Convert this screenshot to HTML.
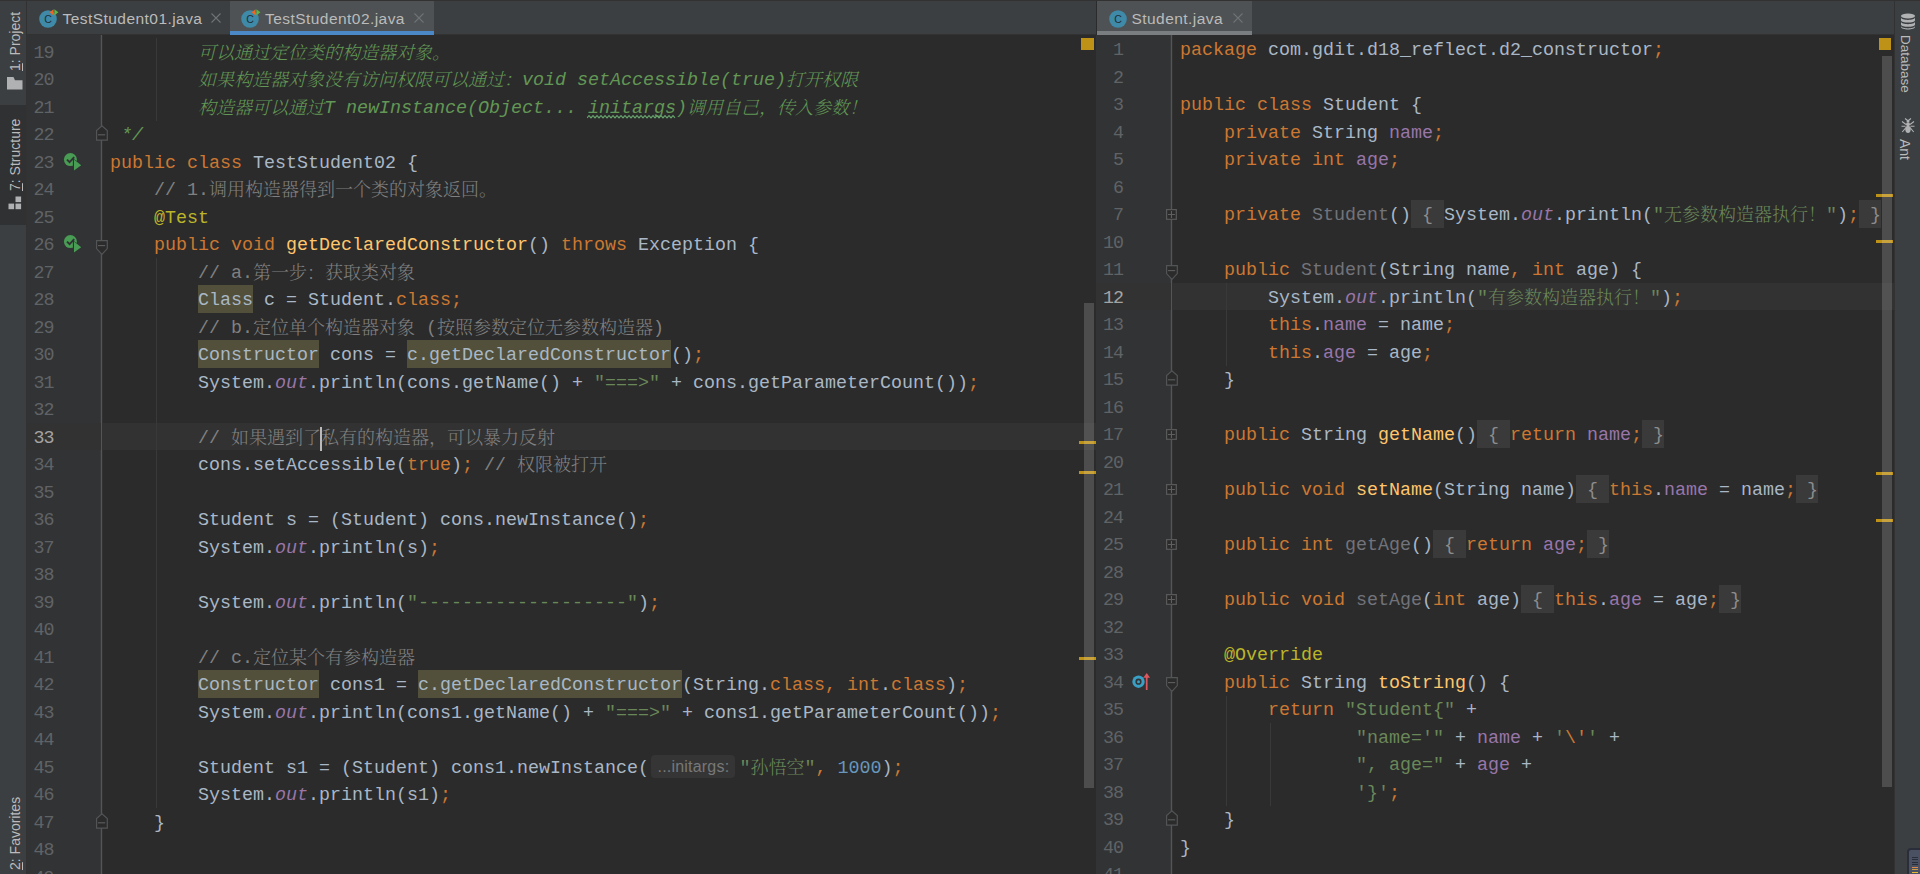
<!DOCTYPE html>
<html lang="zh-CN">
<head>
<meta charset="utf-8">
<title>IntelliJ IDEA</title>
<style>
html,body{margin:0;padding:0;}
body{width:1920px;height:874px;overflow:hidden;background:#2b2b2b;position:relative;
  font-family:"Liberation Sans","Noto Sans CJK SC",sans-serif;}
.abs,.ln,.cl,.r{position:absolute;}
.r{display:block;}
/* code */
.cl{height:27.5px;line-height:27.5px;white-space:pre;color:#a9b7c6;
  font-family:"Liberation Mono","Noto Serif CJK SC",monospace;font-size:18.333px;}
.ln{height:27.5px;line-height:27.5px;text-align:right;letter-spacing:-1px;color:#606366;
  font-family:"Liberation Mono",monospace;font-size:18.333px;}
.ln.cur{color:#a4a3a3;}
i.z{font-weight:300;line-height:0;position:relative;top:1px;font-style:inherit;font-family:"Noto Serif CJK SC","Noto Sans CJK SC",serif;font-size:18px;}
.k{color:#cc7832;} .s{color:#6a8759;} .n{color:#6897bb;} .c{color:#808080;}
.dc{color:#629755;font-style:italic;} .dcw{color:#629755;font-style:italic;}
.a{color:#bbb529;} .m{color:#ffc66d;} .f{color:#9876aa;} .sf{color:#9876aa;font-style:italic;}
.u{color:#72737a;} .fo{color:#8c8c8c;}
b.caret{display:inline-block;width:2px;height:24px;background:#bbbbbb;vertical-align:top;margin:2px -1px 0 -1px;}
b.hint{display:inline-block;font-weight:normal;font-family:"Liberation Sans",sans-serif;font-size:16px;color:#787878;
  background:#353535;border-radius:4px;height:22.5px;line-height:23.5px;vertical-align:top;margin:0.5px 4px 0 2.5px;padding:0 6px 0 6px;width:72px;box-sizing:content-box;letter-spacing:0.2px;text-align:center;}
/* ui text */
.tab{position:absolute;top:2px;height:33px;line-height:34px;font-size:15.5px;letter-spacing:0.45px;color:#bbbbbb;white-space:pre;}
.vt u{text-decoration-thickness:1.4px;text-underline-offset:1.5px;}
.vt{position:absolute;font-size:14px;color:#bbbbbb;white-space:pre;transform-origin:0 0;line-height:18px;height:18px;}
</style>
</head>
<body>
<!-- chrome backgrounds -->
<div class="r" style="left:0;top:0;width:1920px;height:1px;background:#323232"></div>
<div class="r" style="left:27px;top:1px;width:1867px;height:33px;background:#3c3f41"></div>
<div class="r" style="left:27px;top:34px;width:1867px;height:1px;background:#323232"></div>
<!-- left tool strip -->
<div class="r" style="left:0;top:1px;width:26px;height:873px;background:#3c3f41"></div>
<div class="r" style="left:26px;top:1px;width:1px;height:873px;background:#323232"></div>
<div class="r" style="left:0;top:105px;width:26px;height:120px;background:#2f3133"></div>
<!-- right tool strip -->
<div class="r" style="left:1895px;top:1px;width:25px;height:873px;background:#3c3f41"></div>
<div class="r" style="left:1894px;top:1px;width:1px;height:873px;background:#323232"></div>
<!-- left gutter -->
<div class="r" style="left:27px;top:35px;width:74px;height:839px;background:#313335"></div>
<div class="r" style="left:100px;top:35px;width:1px;height:839px;background:rgba(85,85,85,.22)"></div>
<div class="r" style="left:101px;top:35px;width:1px;height:839px;background:#555555"></div>
<div class="r" style="left:102px;top:35px;width:1px;height:839px;background:rgba(85,85,85,.18)"></div>
<!-- right gutter -->
<div class="r" style="left:1096px;top:1px;width:1px;height:34px;background:#2b2b2b"></div>
<div class="r" style="left:1096px;top:35px;width:75px;height:839px;background:#313335"></div>
<div class="r" style="left:1170px;top:35px;width:1px;height:839px;background:rgba(85,85,85,.22)"></div>
<div class="r" style="left:1171px;top:35px;width:1px;height:839px;background:#555555"></div>
<div class="r" style="left:1172px;top:35px;width:1px;height:839px;background:rgba(85,85,85,.18)"></div>
<!-- caret rows -->
<div class="r" style="left:27px;top:423px;width:74px;height:27px;background:#323232"></div>
<div class="r" style="left:102px;top:423px;width:994px;height:27px;background:#323232"></div>
<div class="r" style="left:1096px;top:283px;width:75px;height:27px;background:#323232"></div>
<div class="r" style="left:1172px;top:283px;width:722px;height:27px;background:#323232"></div>
<!-- tabs -->
<div class="r" style="left:230px;top:1px;width:204px;height:33px;background:#4e5254"></div>
<div class="r" style="left:230px;top:31px;width:204px;height:4px;background:#4a88c7"></div>
<div class="r" style="left:1097px;top:1px;width:155px;height:33px;background:#4e5254"></div>
<div class="r" style="left:1097px;top:31px;width:155px;height:4px;background:#7a7e81"></div>
<div class="tab" style="left:62.5px">TestStudent01.java</div>
<div class="tab" style="left:265px">TestStudent02.java</div>
<div class="tab" style="left:1131.5px">Student.java</div>

<div id="bg">
<div class="r" style="left:198.0px;top:285px;width:55.0px;height:28px;background:#52503a"></div>
<div class="r" style="left:198.0px;top:340px;width:121.0px;height:28px;background:#52503a"></div>
<div class="r" style="left:407.0px;top:340px;width:264.0px;height:28px;background:#52503a"></div>
<div class="r" style="left:198.0px;top:670px;width:121.0px;height:28px;background:#52503a"></div>
<div class="r" style="left:418.1px;top:670px;width:264.0px;height:28px;background:#52503a"></div>
<div class="r" style="left:1411.0px;top:200px;width:33.0px;height:28px;background:#3a3a3a"></div>
<div class="r" style="left:1859.1px;top:200px;width:22.0px;height:28px;background:#3a3a3a"></div>
<div class="r" style="left:1477.0px;top:420px;width:33.0px;height:28px;background:#3a3a3a"></div>
<div class="r" style="left:1642.1px;top:420px;width:22.0px;height:28px;background:#3a3a3a"></div>
<div class="r" style="left:1576.1px;top:475px;width:33.0px;height:28px;background:#3a3a3a"></div>
<div class="r" style="left:1796.1px;top:475px;width:22.0px;height:28px;background:#3a3a3a"></div>
<div class="r" style="left:1433.0px;top:530px;width:33.0px;height:28px;background:#3a3a3a"></div>
<div class="r" style="left:1587.1px;top:530px;width:22.0px;height:28px;background:#3a3a3a"></div>
<div class="r" style="left:1521.1px;top:585px;width:33.0px;height:28px;background:#3a3a3a"></div>
<div class="r" style="left:1719.1px;top:585px;width:22.0px;height:28px;background:#3a3a3a"></div>
</div>
<div id="lp">
<div class="ln" style="top:39.5px;left:27px;width:26.5px">19</div>
<div class="cl" style="top:39.5px;left:110px">        <span class="dc"><i class="z">可以通过定位类的构造器对象。</i></span></div>
<div class="ln" style="top:67.0px;left:27px;width:26.5px">20</div>
<div class="cl" style="top:67.0px;left:110px">        <span class="dc"><i class="z">如果构造器对象没有访问权限可以通过：</i>void setAccessible(true)<i class="z">打开权限</i></span></div>
<div class="ln" style="top:94.5px;left:27px;width:26.5px">21</div>
<div class="cl" style="top:94.5px;left:110px">        <span class="dc"><i class="z">构造器可以通过</i>T newInstance(Object... </span><span class="dcw">initargs</span><span class="dc">)<i class="z">调用自己，传入参数！</i></span></div>
<div class="ln" style="top:122.0px;left:27px;width:26.5px">22</div>
<div class="cl" style="top:122.0px;left:110px"> <span class="dc">*/</span></div>
<div class="ln" style="top:149.5px;left:27px;width:26.5px">23</div>
<div class="cl" style="top:149.5px;left:110px"><span class="k">public class</span> TestStudent02 {</div>
<div class="ln" style="top:177.0px;left:27px;width:26.5px">24</div>
<div class="cl" style="top:177.0px;left:110px">    <span class="c">// 1.<i class="z">调用构造器得到一个类的对象返回。</i></span></div>
<div class="ln" style="top:204.5px;left:27px;width:26.5px">25</div>
<div class="cl" style="top:204.5px;left:110px">    <span class="a">@Test</span></div>
<div class="ln" style="top:232.0px;left:27px;width:26.5px">26</div>
<div class="cl" style="top:232.0px;left:110px">    <span class="k">public void</span> <span class="m">getDeclaredConstructor</span>() <span class="k">throws</span> Exception {</div>
<div class="ln" style="top:259.5px;left:27px;width:26.5px">27</div>
<div class="cl" style="top:259.5px;left:110px">        <span class="c">// a.<i class="z">第一步：获取类对象</i></span></div>
<div class="ln" style="top:287.0px;left:27px;width:26.5px">28</div>
<div class="cl" style="top:287.0px;left:110px">        <span class="w">Class</span> c = Student.<span class="k">class;</span></div>
<div class="ln" style="top:314.5px;left:27px;width:26.5px">29</div>
<div class="cl" style="top:314.5px;left:110px">        <span class="c">// b.<i class="z">定位单个构造器对象</i> (<i class="z">按照参数定位无参数构造器</i>)</span></div>
<div class="ln" style="top:342.0px;left:27px;width:26.5px">30</div>
<div class="cl" style="top:342.0px;left:110px">        <span class="w">Constructor</span> cons = <span class="w">c.getDeclaredConstructor</span>()<span class="k">;</span></div>
<div class="ln" style="top:369.5px;left:27px;width:26.5px">31</div>
<div class="cl" style="top:369.5px;left:110px">        System.<span class="sf">out</span>.println(cons.getName() + <span class="s">"===&gt;"</span> + cons.getParameterCount())<span class="k">;</span></div>
<div class="ln" style="top:397.0px;left:27px;width:26.5px">32</div>
<div class="ln cur" style="top:424.5px;left:27px;width:26.5px">33</div>
<div class="cl" style="top:424.5px;left:110px">        <span class="c">// <i class="z">如果遇到了</i></span><b class="caret"></b><span class="c"><i class="z">私有的构造器，可以暴力反射</i></span></div>
<div class="ln" style="top:452.0px;left:27px;width:26.5px">34</div>
<div class="cl" style="top:452.0px;left:110px">        cons.setAccessible(<span class="k">true</span>)<span class="k">;</span> <span class="c">// <i class="z">权限被打开</i></span></div>
<div class="ln" style="top:479.5px;left:27px;width:26.5px">35</div>
<div class="ln" style="top:507.0px;left:27px;width:26.5px">36</div>
<div class="cl" style="top:507.0px;left:110px">        Student s = (Student) cons.newInstance()<span class="k">;</span></div>
<div class="ln" style="top:534.5px;left:27px;width:26.5px">37</div>
<div class="cl" style="top:534.5px;left:110px">        System.<span class="sf">out</span>.println(s)<span class="k">;</span></div>
<div class="ln" style="top:562.0px;left:27px;width:26.5px">38</div>
<div class="ln" style="top:589.5px;left:27px;width:26.5px">39</div>
<div class="cl" style="top:589.5px;left:110px">        System.<span class="sf">out</span>.println(<span class="s">"-------------------"</span>)<span class="k">;</span></div>
<div class="ln" style="top:617.0px;left:27px;width:26.5px">40</div>
<div class="ln" style="top:644.5px;left:27px;width:26.5px">41</div>
<div class="cl" style="top:644.5px;left:110px">        <span class="c">// c.<i class="z">定位某个有参构造器</i></span></div>
<div class="ln" style="top:672.0px;left:27px;width:26.5px">42</div>
<div class="cl" style="top:672.0px;left:110px">        <span class="w">Constructor</span> cons1 = <span class="w">c.getDeclaredConstructor</span>(String.<span class="k">class,</span> <span class="k">int</span>.<span class="k">class</span>)<span class="k">;</span></div>
<div class="ln" style="top:699.5px;left:27px;width:26.5px">43</div>
<div class="cl" style="top:699.5px;left:110px">        System.<span class="sf">out</span>.println(cons1.getName() + <span class="s">"===&gt;"</span> + cons1.getParameterCount())<span class="k">;</span></div>
<div class="ln" style="top:727.0px;left:27px;width:26.5px">44</div>
<div class="ln" style="top:754.5px;left:27px;width:26.5px">45</div>
<div class="cl" style="top:754.5px;left:110px">        Student s1 = (Student) cons1.newInstance(<b class="hint">...initargs:</b><span class="s">"<i class="z">孙悟空</i>"</span><span class="k">,</span> <span class="n">1000</span>)<span class="k">;</span></div>
<div class="ln" style="top:782.0px;left:27px;width:26.5px">46</div>
<div class="cl" style="top:782.0px;left:110px">        System.<span class="sf">out</span>.println(s1)<span class="k">;</span></div>
<div class="ln" style="top:809.5px;left:27px;width:26.5px">47</div>
<div class="cl" style="top:809.5px;left:110px">    }</div>
<div class="ln" style="top:837.0px;left:27px;width:26.5px">48</div>
<div class="ln" style="top:864.5px;left:27px;width:26.5px">49</div>
</div>
<div id="rp">
<div class="ln" style="top:37.0px;left:1097px;width:26px">1</div>
<div class="cl" style="top:37.0px;left:1180px"><span class="k">package</span> com.gdit.d18_reflect.d2_constructor<span class="k">;</span></div>
<div class="ln" style="top:64.5px;left:1097px;width:26px">2</div>
<div class="ln" style="top:92.0px;left:1097px;width:26px">3</div>
<div class="cl" style="top:92.0px;left:1180px"><span class="k">public class</span> Student {</div>
<div class="ln" style="top:119.5px;left:1097px;width:26px">4</div>
<div class="cl" style="top:119.5px;left:1180px">    <span class="k">private</span> String <span class="f">name</span><span class="k">;</span></div>
<div class="ln" style="top:147.0px;left:1097px;width:26px">5</div>
<div class="cl" style="top:147.0px;left:1180px">    <span class="k">private int</span> <span class="f">age</span><span class="k">;</span></div>
<div class="ln" style="top:174.5px;left:1097px;width:26px">6</div>
<div class="ln" style="top:202.0px;left:1097px;width:26px">7</div>
<div class="cl" style="top:202.0px;left:1180px">    <span class="k">private</span> <span class="u">Student</span>()<span class="fo"> { </span>System.<span class="sf">out</span>.println(<span class="s">"<i class="z">无参数构造器执行！</i>"</span>)<span class="k">;</span><span class="fo"> }</span></div>
<div class="ln" style="top:229.5px;left:1097px;width:26px">10</div>
<div class="ln" style="top:257.0px;left:1097px;width:26px">11</div>
<div class="cl" style="top:257.0px;left:1180px">    <span class="k">public</span> <span class="u">Student</span>(String name<span class="k">,</span> <span class="k">int</span> age) {</div>
<div class="ln cur" style="top:284.5px;left:1097px;width:26px">12</div>
<div class="cl" style="top:284.5px;left:1180px">        System.<span class="sf">out</span>.println(<span class="s">"<i class="z">有参数构造器执行！</i>"</span>)<span class="k">;</span></div>
<div class="ln" style="top:312.0px;left:1097px;width:26px">13</div>
<div class="cl" style="top:312.0px;left:1180px">        <span class="k">this</span>.<span class="f">name</span> = name<span class="k">;</span></div>
<div class="ln" style="top:339.5px;left:1097px;width:26px">14</div>
<div class="cl" style="top:339.5px;left:1180px">        <span class="k">this</span>.<span class="f">age</span> = age<span class="k">;</span></div>
<div class="ln" style="top:367.0px;left:1097px;width:26px">15</div>
<div class="cl" style="top:367.0px;left:1180px">    }</div>
<div class="ln" style="top:394.5px;left:1097px;width:26px">16</div>
<div class="ln" style="top:422.0px;left:1097px;width:26px">17</div>
<div class="cl" style="top:422.0px;left:1180px">    <span class="k">public</span> String <span class="m">getName</span>()<span class="fo"> { </span><span class="k">return</span> <span class="f">name</span><span class="k">;</span><span class="fo"> }</span></div>
<div class="ln" style="top:449.5px;left:1097px;width:26px">20</div>
<div class="ln" style="top:477.0px;left:1097px;width:26px">21</div>
<div class="cl" style="top:477.0px;left:1180px">    <span class="k">public void</span> <span class="m">setName</span>(String name)<span class="fo"> { </span><span class="k">this</span>.<span class="f">name</span> = name<span class="k">;</span><span class="fo"> }</span></div>
<div class="ln" style="top:504.5px;left:1097px;width:26px">24</div>
<div class="ln" style="top:532.0px;left:1097px;width:26px">25</div>
<div class="cl" style="top:532.0px;left:1180px">    <span class="k">public int</span> <span class="u">getAge</span>()<span class="fo"> { </span><span class="k">return</span> <span class="f">age</span><span class="k">;</span><span class="fo"> }</span></div>
<div class="ln" style="top:559.5px;left:1097px;width:26px">28</div>
<div class="ln" style="top:587.0px;left:1097px;width:26px">29</div>
<div class="cl" style="top:587.0px;left:1180px">    <span class="k">public void</span> <span class="u">setAge</span>(<span class="k">int</span> age)<span class="fo"> { </span><span class="k">this</span>.<span class="f">age</span> = age<span class="k">;</span><span class="fo"> }</span></div>
<div class="ln" style="top:614.5px;left:1097px;width:26px">32</div>
<div class="ln" style="top:642.0px;left:1097px;width:26px">33</div>
<div class="cl" style="top:642.0px;left:1180px">    <span class="a">@Override</span></div>
<div class="ln" style="top:669.5px;left:1097px;width:26px">34</div>
<div class="cl" style="top:669.5px;left:1180px">    <span class="k">public</span> String <span class="m">toString</span>() {</div>
<div class="ln" style="top:697.0px;left:1097px;width:26px">35</div>
<div class="cl" style="top:697.0px;left:1180px">        <span class="k">return</span> <span class="s">"Student{"</span> +</div>
<div class="ln" style="top:724.5px;left:1097px;width:26px">36</div>
<div class="cl" style="top:724.5px;left:1180px">                <span class="s">"name='"</span> + <span class="f">name</span> + <span class="s">'</span><span class="k">\'</span><span class="s">'</span> +</div>
<div class="ln" style="top:752.0px;left:1097px;width:26px">37</div>
<div class="cl" style="top:752.0px;left:1180px">                <span class="s">", age="</span> + <span class="f">age</span> +</div>
<div class="ln" style="top:779.5px;left:1097px;width:26px">38</div>
<div class="cl" style="top:779.5px;left:1180px">                <span class="s">'}'</span><span class="k">;</span></div>
<div class="ln" style="top:807.0px;left:1097px;width:26px">39</div>
<div class="cl" style="top:807.0px;left:1180px">    }</div>
<div class="ln" style="top:834.5px;left:1097px;width:26px">40</div>
<div class="cl" style="top:834.5px;left:1180px">}</div>
<div class="ln" style="top:862.0px;left:1097px;width:26px">41</div>
</div>
<div class="r" style="left:156px;top:38px;width:1px;height:82.5px;background:#393939"></div>
<div class="r" style="left:156px;top:258px;width:1px;height:550px;background:#393939"></div>
<div class="r" style="left:1226px;top:283px;width:1px;height:82.5px;background:#393939"></div>
<div class="r" style="left:1226px;top:695.5px;width:1px;height:110px;background:#393939"></div>
<div class="r" style="left:1270px;top:723px;width:1px;height:82.5px;background:#393939"></div>
<svg class="abs" style="left:587px;top:115.3px" width="89" height="4" viewBox="0 0 89 4"><polyline points="0,2.9 2,0.6 4,2.9 6,0.6 8,2.9 10,0.6 12,2.9 14,0.6 16,2.9 18,0.6 20,2.9 22,0.6 24,2.9 26,0.6 28,2.9 30,0.6 32,2.9 34,0.6 36,2.9 38,0.6 40,2.9 42,0.6 44,2.9 46,0.6 48,2.9 50,0.6 52,2.9 54,0.6 56,2.9 58,0.6 60,2.9 62,0.6 64,2.9 66,0.6 68,2.9 70,0.6 72,2.9 74,0.6 76,2.9 78,0.6 80,2.9 82,0.6 84,2.9 86,0.6 88,2.9" fill="none" stroke="#66a36d" stroke-width="1.15"/></svg>
<div class="r" style="left:1081px;top:38px;width:13px;height:12px;background:#be9117"></div>
<div class="r" style="left:1879px;top:38px;width:12px;height:12px;background:#be9117"></div>
<div class="r" style="left:1079px;top:441px;width:17px;height:3px;background:#be9117"></div>
<div class="r" style="left:1079px;top:471px;width:17px;height:3px;background:#be9117"></div>
<div class="r" style="left:1079px;top:657px;width:17px;height:3px;background:#be9117"></div>
<div class="r" style="left:1876px;top:194px;width:17px;height:3px;background:#be9117"></div>
<div class="r" style="left:1876px;top:240px;width:17px;height:3px;background:#be9117"></div>
<div class="r" style="left:1876px;top:472px;width:17px;height:3px;background:#be9117"></div>
<div class="r" style="left:1876px;top:519px;width:17px;height:3px;background:#be9117"></div>
<div class="r" style="left:1084px;top:303px;width:10px;height:485px;background:rgba(255,255,255,.16)"></div>
<div class="r" style="left:1882px;top:56px;width:10px;height:731px;background:rgba(255,255,255,.16)"></div>
<svg class="abs" style="left:95px;top:124.1px" width="14" height="18" viewBox="-1 -1 14 18"><path d="M0.6 15.1H11.3V5.6L5.95 0.8L0.6 5.6Z" fill="#2b2b2b" stroke="#525456" stroke-width="1.2"/><path d="M2 9.8H9.2" stroke="#5c5e60" stroke-width="1.1"/></svg>
<svg class="abs" style="left:95px;top:238.8px" width="14" height="18" viewBox="-1 -1 14 18"><path d="M0.6 0.6H11.3V8.6L5.95 14.4L0.6 8.6Z" fill="#2b2b2b" stroke="#525456" stroke-width="1.2"/><path d="M2 5.6H9.2" stroke="#5c5e60" stroke-width="1.1"/></svg>
<svg class="abs" style="left:95px;top:811.6px" width="14" height="18" viewBox="-1 -1 14 18"><path d="M0.6 15.1H11.3V5.6L5.95 0.8L0.6 5.6Z" fill="#2b2b2b" stroke="#525456" stroke-width="1.2"/><path d="M2 9.8H9.2" stroke="#5c5e60" stroke-width="1.1"/></svg>
<svg class="abs" style="left:1165px;top:208.1px" width="13" height="13" viewBox="-1 -1 13 13"><rect x="0.6" y="0.6" width="9.7" height="9.7" fill="#2b2b2b" stroke="#595959" stroke-width="1.2"/><path d="M2 5.45H8.9M5.45 2V8.9" stroke="#606060" stroke-width="1.1"/></svg>
<svg class="abs" style="left:1165px;top:428.1px" width="13" height="13" viewBox="-1 -1 13 13"><rect x="0.6" y="0.6" width="9.7" height="9.7" fill="#2b2b2b" stroke="#595959" stroke-width="1.2"/><path d="M2 5.45H8.9M5.45 2V8.9" stroke="#606060" stroke-width="1.1"/></svg>
<svg class="abs" style="left:1165px;top:483.1px" width="13" height="13" viewBox="-1 -1 13 13"><rect x="0.6" y="0.6" width="9.7" height="9.7" fill="#2b2b2b" stroke="#595959" stroke-width="1.2"/><path d="M2 5.45H8.9M5.45 2V8.9" stroke="#606060" stroke-width="1.1"/></svg>
<svg class="abs" style="left:1165px;top:538.1px" width="13" height="13" viewBox="-1 -1 13 13"><rect x="0.6" y="0.6" width="9.7" height="9.7" fill="#2b2b2b" stroke="#595959" stroke-width="1.2"/><path d="M2 5.45H8.9M5.45 2V8.9" stroke="#606060" stroke-width="1.1"/></svg>
<svg class="abs" style="left:1165px;top:593.1px" width="13" height="13" viewBox="-1 -1 13 13"><rect x="0.6" y="0.6" width="9.7" height="9.7" fill="#2b2b2b" stroke="#595959" stroke-width="1.2"/><path d="M2 5.45H8.9M5.45 2V8.9" stroke="#606060" stroke-width="1.1"/></svg>
<svg class="abs" style="left:1165px;top:263.8px" width="14" height="18" viewBox="-1 -1 14 18"><path d="M0.6 0.6H11.3V8.6L5.95 14.4L0.6 8.6Z" fill="#2b2b2b" stroke="#525456" stroke-width="1.2"/><path d="M2 5.6H9.2" stroke="#5c5e60" stroke-width="1.1"/></svg>
<svg class="abs" style="left:1165px;top:369.1px" width="14" height="18" viewBox="-1 -1 14 18"><path d="M0.6 15.1H11.3V5.6L5.95 0.8L0.6 5.6Z" fill="#2b2b2b" stroke="#525456" stroke-width="1.2"/><path d="M2 9.8H9.2" stroke="#5c5e60" stroke-width="1.1"/></svg>
<svg class="abs" style="left:1165px;top:676.3px" width="14" height="18" viewBox="-1 -1 14 18"><path d="M0.6 0.6H11.3V8.6L5.95 14.4L0.6 8.6Z" fill="#2b2b2b" stroke="#525456" stroke-width="1.2"/><path d="M2 5.6H9.2" stroke="#5c5e60" stroke-width="1.1"/></svg>
<svg class="abs" style="left:1165px;top:809.1px" width="14" height="18" viewBox="-1 -1 14 18"><path d="M0.6 15.1H11.3V5.6L5.95 0.8L0.6 5.6Z" fill="#2b2b2b" stroke="#525456" stroke-width="1.2"/><path d="M2 9.8H9.2" stroke="#5c5e60" stroke-width="1.1"/></svg>
<svg class="abs" style="left:63px;top:151.5px" width="20" height="20" viewBox="0 0 20 20"><circle cx="7.4" cy="7.6" r="6.5" fill="#499c54"/><path d="M4 7.6L6.6 10.2L11.2 5.2" stroke="#313335" stroke-width="1.9" fill="none"/><path d="M9.9 6.2V19.6L19.4 13.3Z" fill="#313335"/><path d="M11 7.4V18.4L18.2 13.2Z" fill="#499c54"/></svg>
<svg class="abs" style="left:63px;top:234px" width="20" height="20" viewBox="0 0 20 20"><circle cx="7.4" cy="7.6" r="6.5" fill="#499c54"/><path d="M4 7.6L6.6 10.2L11.2 5.2" stroke="#313335" stroke-width="1.9" fill="none"/><path d="M9.9 6.2V19.6L19.4 13.3Z" fill="#313335"/><path d="M11 7.4V18.4L18.2 13.2Z" fill="#499c54"/></svg>
<svg class="abs" style="left:1132px;top:671px" width="20" height="20" viewBox="0 0 20 20"><circle cx="6.5" cy="10.7" r="6.2" fill="#3a9fc4"/><circle cx="6.5" cy="10.7" r="3.1" fill="#313335"/><circle cx="6.5" cy="10.7" r="1.5" fill="#3a9fc4"/><path d="M14.7 19V4" stroke="#db5860" stroke-width="1.7"/><path d="M11.3 6.8L14.7 2L18.1 6.8Z" fill="#db5860"/></svg>
<svg class="abs" style="left:38px;top:8px" width="22" height="22" viewBox="0 0 22 22"><circle cx="10" cy="11" r="8.8" fill="#3e8aa8"/><text x="10" y="14.7" text-anchor="middle" font-family="Liberation Sans, sans-serif" font-size="10.5" fill="#1f2e36">C</text><path d="M15.6 1.2V7.4L11.6 4.3Z" fill="#f26522"/><path d="M16.4 1.2V7.4L20.4 4.3Z" fill="#62b543"/></svg>
<svg class="abs" style="left:240px;top:8px" width="22" height="22" viewBox="0 0 22 22"><circle cx="10" cy="11" r="8.8" fill="#3e8aa8"/><text x="10" y="14.7" text-anchor="middle" font-family="Liberation Sans, sans-serif" font-size="10.5" fill="#1f2e36">C</text><path d="M15.6 1.2V7.4L11.6 4.3Z" fill="#f26522"/><path d="M16.4 1.2V7.4L20.4 4.3Z" fill="#62b543"/></svg>
<svg class="abs" style="left:1108px;top:8px" width="22" height="22" viewBox="0 0 22 22"><circle cx="10" cy="11" r="8.8" fill="#3e8aa8"/><text x="10" y="14.7" text-anchor="middle" font-family="Liberation Sans, sans-serif" font-size="10.5" fill="#1f2e36">C</text></svg>
<svg class="abs" style="left:211px;top:13px" width="10" height="10" viewBox="0 0 10 10"><path d="M0.5 0.5L9.5 9.5M9.5 0.5L0.5 9.5" stroke="#6f7375" stroke-width="1.1" fill="none"/></svg>
<svg class="abs" style="left:414px;top:13px" width="10" height="10" viewBox="0 0 10 10"><path d="M0.5 0.5L9.5 9.5M9.5 0.5L0.5 9.5" stroke="#6f7375" stroke-width="1.1" fill="none"/></svg>
<svg class="abs" style="left:1233px;top:13px" width="10" height="10" viewBox="0 0 10 10"><path d="M0.5 0.5L9.5 9.5M9.5 0.5L0.5 9.5" stroke="#6f7375" stroke-width="1.1" fill="none"/></svg>
<div class="vt" style="left:6px;top:70.5px;font-size:14px;transform:rotate(-90deg)"><u>1</u>: Project</div>
<div class="vt" style="left:6px;top:190.5px;font-size:14px;transform:rotate(-90deg)"><u>7</u>: Structure</div>
<div class="vt" style="left:6px;top:870px;font-size:14px;transform:rotate(-90deg)"><u>2</u>: Favorites</div>
<div class="vt" style="left:1914px;top:35px;font-size:13.5px;transform:rotate(90deg)">Database</div>
<div class="vt" style="left:1914px;top:138.5px;font-size:14px;transform:rotate(90deg)">Ant</div>
<svg class="abs" style="left:7px;top:77px" width="16" height="13" viewBox="0 0 16 13"><path d="M0 0H6.5L8 3.2H15.5V12.5H0Z" fill="#afb1b3"/></svg>
<svg class="abs" style="left:8px;top:196px" width="14" height="14" viewBox="0 0 14 14"><rect x="7.5" y="0.5" width="5.6" height="5.6" fill="#afb1b3"/><rect x="0.5" y="7.6" width="5.6" height="5.6" fill="#afb1b3"/><rect x="7.5" y="7.6" width="5.6" height="5.6" fill="#afb1b3"/></svg>
<svg class="abs" style="left:1900px;top:13px" width="16" height="17" viewBox="0 0 16 17"><g fill="#afb1b3"><ellipse cx="8" cy="3" rx="7" ry="2.4"/><path d="M1 4.6C1 7.8 15 7.8 15 4.6V7.2C15 10.4 1 10.4 1 7.2Z"/><path d="M1 8.8C1 12 15 12 15 8.8V11.4C15 14.6 1 14.6 1 11.4Z"/><path d="M1 13C1 16.2 15 16.2 15 13V13.8C15 17.4 1 17.4 1 13.8Z"/></g></svg>
<svg class="abs" style="left:1900px;top:118px" width="16" height="16" viewBox="0 0 16 16"><g fill="#afb1b3" stroke="#afb1b3" stroke-width="1.1"><ellipse cx="8" cy="11.3" rx="2.7" ry="3.6" stroke="none"/><circle cx="8" cy="6.2" r="2" stroke="none"/><circle cx="8" cy="3" r="1.5" stroke="none"/><path d="M6 6.5L2 3.5M10 6.5L14 3.5M5.6 8.2H1.5M10.4 8.2H14.5M6 9.5L2.3 14M10 9.5L13.7 14M7 2L5 0.5M9 2L11 0.5" fill="none"/></g></svg>
<div class="r" style="left:1907px;top:848px;width:20px;height:30px;background:#4a5163;border:2px solid #2a2e3a;border-radius:4px"></div>
<div class="r" style="left:1912px;top:856.5px;width:6px;height:1.2px;background:#2a2e3a"></div>
<div class="r" style="left:1912px;top:859px;width:6px;height:1.2px;background:#2a2e3a"></div>
<div class="r" style="left:1912px;top:861.5px;width:6px;height:1.2px;background:#2a2e3a"></div>
<div class="r" style="left:1912px;top:864px;width:6px;height:1.2px;background:#2a2e3a"></div>
<div class="r" style="left:1912px;top:866.5px;width:6px;height:1.2px;background:#e08a4a"></div>
<div class="r" style="left:1912px;top:869px;width:6px;height:1.2px;background:#c99a4a"></div>
<div class="r" style="left:1912px;top:871.5px;width:6px;height:1.2px;background:#e8b830"></div>
</body>
</html>
